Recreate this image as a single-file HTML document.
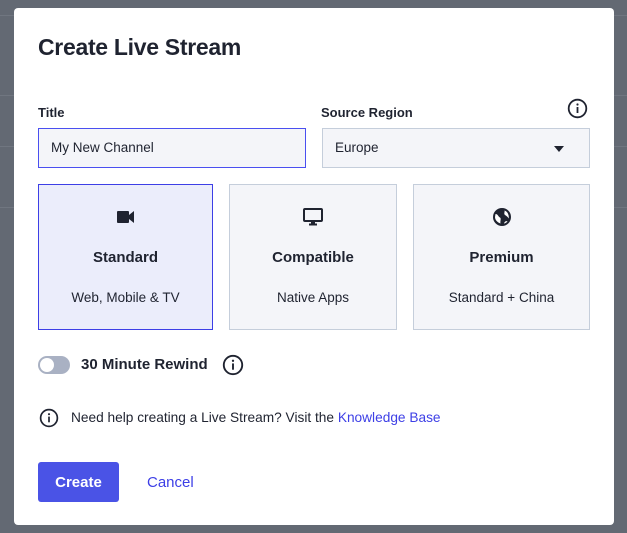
<!DOCTYPE html>
<html><head><meta charset="utf-8"><style>
*{box-sizing:border-box;margin:0;padding:0}
body{width:627px;height:533px;overflow:hidden;background:#636973;font-family:"Liberation Sans",sans-serif;color:#1f2330;position:relative}
.l{position:absolute;left:0;right:0;height:1px;background:#707680}
.m{position:absolute;left:14px;top:8px;width:600px;height:517px;background:#fff;border-radius:4px}
.a{position:absolute}
.h1{left:24px;top:26px;font-size:23px;font-weight:bold;letter-spacing:-0.3px}
.lb{font-size:13px;font-weight:bold}
.in{position:absolute;top:120px;height:40px;background:#f4f5f9;border:1px solid #c5cedb;font-size:13.5px;padding:11px 12px;}
.card{position:absolute;top:176px;height:146px;background:#f4f5f9;border:1px solid #c5cedb;text-align:center}
.card.s{background:#ebedfb;border-color:#3d3fe6}
.ct{position:absolute;left:0;right:0;top:64px;font-size:15px;font-weight:bold}
.cs{position:absolute;left:0;right:0;top:105px;font-size:13.5px}
.ic{position:absolute;left:50%;top:22px;transform:translateX(-50%)}
</style></head><body>
<div class="l" style="top:15px"></div><div class="l" style="top:95px"></div><div class="l" style="top:146px"></div><div class="l" style="top:207px"></div>
<div class="m">
<div class="a h1">Create Live Stream</div>
<div class="a lb" style="left:24px;top:97px">Title</div>
<div class="a lb" style="left:307px;top:97px">Source Region</div>
<svg class="a" style="left:553px;top:90px" width="21" height="21" viewBox="0 0 21 21"><circle cx="10.5" cy="10.5" r="8.8" fill="none" stroke="#1f2330" stroke-width="1.8"/><rect x="9.6" y="9" width="1.8" height="6" fill="#1f2330"/><circle cx="10.5" cy="6.5" r="1.1" fill="#1f2330"/></svg>
<div class="in" style="left:24px;width:268px;border-color:#4a4ff0">My New Channel</div>
<div class="in" style="left:308px;width:268px">Europe<span style="position:absolute;right:25px;top:17px;border-left:5px solid transparent;border-right:5px solid transparent;border-top:6px solid #1f2330"></span></div>
<div class="card s" style="left:24px;width:175px">
<svg class="ic" style="top:26px" width="18" height="12" viewBox="0 0 18 12"><rect x="0" y="0" width="12" height="12" rx="1" fill="#1f2330"/><path d="M12 4L17 0V12L12 8Z" fill="#1f2330"/></svg>
<div class="ct">Standard</div><div class="cs">Web, Mobile &amp; TV</div></div>
<div class="card" style="left:215px;width:168px">
<svg class="ic" width="22" height="20" viewBox="0 0 22 20"><rect x="2" y="2" width="18" height="12" rx="1" fill="none" stroke="#1f2330" stroke-width="2"/><rect x="9" y="14" width="4" height="3" fill="#1f2330"/><rect x="7" y="16.5" width="8" height="2" fill="#1f2330"/></svg>
<div class="ct">Compatible</div><div class="cs">Native Apps</div></div>
<div class="card" style="left:399px;width:177px">
<svg class="ic" width="20" height="20" viewBox="0 0 20 20"><circle cx="10" cy="10" r="9" fill="#1f2330"/><path d="M3.5 7C6 7 6 9.5 8 10.5C9.5 11.5 8 14 8.5 16.5C5.5 15.5 3 13 3 10Z M12.5 3.5C13 5 11.5 6.5 13 8C15 9 16 10.5 16.8 11.5C17 7.5 15.5 4.5 12.5 3.5Z M12 16.5C12.5 14.5 14.5 13.5 15.5 14.5C14.5 15.5 13.5 16.2 12 16.5Z" fill="#fff"/></svg>
<div class="ct">Premium</div><div class="cs">Standard + China</div></div>
<div class="a" style="left:24px;top:348px;width:32px;height:18px;border-radius:9px;background:#a9b1c3"><div style="position:absolute;left:2px;top:2px;width:14px;height:14px;border-radius:50%;background:#fff"></div></div>
<div class="a" style="left:67px;top:348px;font-size:15px;font-weight:bold">30 Minute Rewind</div>
<svg class="a" style="left:208px;top:346px" width="22" height="22" viewBox="0 0 21 21"><circle cx="10.5" cy="10.5" r="8.8" fill="none" stroke="#1f2330" stroke-width="1.8"/><rect x="9.6" y="9" width="1.8" height="6" fill="#1f2330"/><circle cx="10.5" cy="6.5" r="1.1" fill="#1f2330"/></svg>
<svg class="a" style="left:25px;top:400px" width="20" height="20" viewBox="0 0 21 21"><circle cx="10.5" cy="10.5" r="8.8" fill="none" stroke="#1f2330" stroke-width="1.8"/><rect x="9.6" y="9" width="1.8" height="6" fill="#1f2330"/><circle cx="10.5" cy="6.5" r="1.1" fill="#1f2330"/></svg>
<div class="a" style="left:57px;top:402px;font-size:13.7px">Need help creating a Live Stream? Visit the <span style="color:#3d3fe6">Knowledge Base</span></div>
<div class="a" style="left:24px;top:454px;width:81px;height:40px;border-radius:3px;background:#4a53e6;color:#fff;font-size:15px;font-weight:bold;text-align:center;line-height:42px">Create</div>
<div class="a" style="left:133px;top:466px;font-size:15px;color:#3d3fe6">Cancel</div>
</div>
</body></html>
